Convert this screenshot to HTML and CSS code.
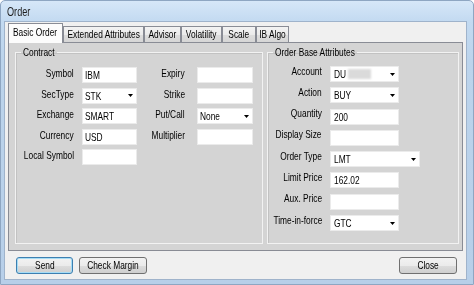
FILE: index.html
```html
<!DOCTYPE html>
<html>
<head>
<meta charset="utf-8">
<link rel="stylesheet" href="styles.css">
</head>
<body>
<div class="window">
  <div class="titlebar"><span class="sx">Order</span></div>
  <div class="client">
    <div class="tabs">
      <div class="tab active t1"><span class="sx">Basic Order</span></div>
      <div class="tab t2"><span class="sx">Extended Attributes</span></div>
      <div class="tab t3"><span class="sx">Advisor</span></div>
      <div class="tab t4"><span class="sx">Volatility</span></div>
      <div class="tab t5"><span class="sx">Scale</span></div>
      <div class="tab t6"><span class="sx">IB Algo</span></div>
    </div>
    <div class="page">
      <fieldset class="group contract">
        <legend class="lg1"><span class="sx">Contract</span></legend>
        <div class="grid4">
          <span class="lbl">Symbol</span><div class="field"><span class="sx">IBM</span></div>
          <span class="lbl lbl2">Expiry</span><div class="field"></div>
          <span class="lbl">SecType</span><div class="field combo"><span class="sx">STK</span><svg class="arrow" width="5" height="3" viewBox="0 0 5 3"><polygon points="0,0 5,0 2.5,3" fill="#000"/></svg></div>
          <span class="lbl lbl2">Strike</span><div class="field"></div>
          <span class="lbl">Exchange</span><div class="field"><span class="sx">SMART</span></div>
          <span class="lbl lbl2">Put/Call</span><div class="field combo"><span class="sx">None</span><svg class="arrow" width="5" height="3" viewBox="0 0 5 3"><polygon points="0,0 5,0 2.5,3" fill="#000"/></svg></div>
          <span class="lbl">Currency</span><div class="field"><span class="sx">USD</span></div>
          <span class="lbl lbl2">Multiplier</span><div class="field"></div>
          <span class="lbl">Local Symbol</span><div class="field"></div>
        </div>
      </fieldset>
      <fieldset class="group base">
        <legend class="lg2"><span class="sx">Order Base Attributes</span></legend>
        <div class="grid2">
          <span class="lbl">Account</span><div class="field combo w69"><span class="sx">DU</span><span class="redact"></span><svg class="arrow" width="5" height="3" viewBox="0 0 5 3"><polygon points="0,0 5,0 2.5,3" fill="#000"/></svg></div>
          <span class="lbl">Action</span><div class="field combo w69"><span class="sx">BUY</span><svg class="arrow" width="5" height="3" viewBox="0 0 5 3"><polygon points="0,0 5,0 2.5,3" fill="#000"/></svg></div>
          <span class="lbl">Quantity</span><div class="field w69"><span class="sx">200</span></div>
          <span class="lbl">Display Size</span><div class="field w69"></div>
          <span class="lbl">Order Type</span><div class="field combo w90"><span class="sx">LMT</span><svg class="arrow" width="5" height="3" viewBox="0 0 5 3"><polygon points="0,0 5,0 2.5,3" fill="#000"/></svg></div>
          <span class="lbl">Limit Price</span><div class="field w69"><span class="sx">162.02</span></div>
          <span class="lbl">Aux. Price</span><div class="field w69"></div>
          <span class="lbl">Time-in-force</span><div class="field combo w69"><span class="sx">GTC</span><svg class="arrow" width="5" height="3" viewBox="0 0 5 3"><polygon points="0,0 5,0 2.5,3" fill="#000"/></svg></div>
        </div>
      </fieldset>
    </div>
    <div class="buttons">
      <div class="btn default w-send"><span class="sx">Send</span></div>
      <div class="btn w-check"><span class="sx">Check Margin</span></div>
      <div class="btn w-close push"><span class="sx">Close</span></div>
    </div>
  </div>
</div>
</body>
</html>
```
FILE: styles.css
```css
html, body {
  margin: 0;
  padding: 0;
}
body {
  width: 474px;
  height: 285px;
  overflow: hidden;
  background: #ffffff;
  font-family: "Liberation Sans", Arial, sans-serif;
  font-size: 11px;
  color: #000;
}
.sx {
  display: inline-block;
  white-space: nowrap;
  transform: scaleX(0.76);
  transform-origin: left center;
}
.window {
  box-sizing: border-box;
  width: 474px;
  height: 285px;
  border: 1px solid #8ea6c2;
  border-radius: 5px 5px 0 0;
  background: linear-gradient(to bottom, #d6e7f8 0px, #c3daf1 20px, #bcd4ec 60px, #b7cfe9 100%);
  padding: 0 6px 4px 3px;
  display: flex;
  flex-direction: column;
}
.titlebar {
  height: 20px;
  line-height: 22px;
  padding-left: 3px;
  font-size: 12px;
  color: #1e1e1e;
}
.client {
  flex: 1;
  background: #f0f0f0;
  border: 1px solid #9fb3cb;
  display: flex;
  flex-direction: column;
}
.tabs {
  display: flex;
  align-items: flex-end;
  height: 20px;
  padding-left: 3px;
}
.tab {
  box-sizing: border-box;
  height: 16px;
  border: 1px solid #898c95;
  border-bottom: none;
  background: linear-gradient(to bottom, #f3f3f3 0%, #ebebeb 50%, #dddddd 51%, #d6d6d6 100%);
  display: flex;
  justify-content: center;
  align-items: center;
  line-height: 13px;
  overflow: visible;
}
.tab .sx,
.btn .sx {
  transform-origin: center center;
}
.tab.active {
  height: 20px;
  margin-bottom: -1px;
  background: #fcfcfc;
  align-items: flex-start;
  padding-top: 2px;
  position: relative;
  z-index: 1;
}
.t1 { width: 55px; }
.t2 { width: 81px; }
.t3 { width: 37px; }
.t4 { width: 41px; }
.t5 { width: 34px; }
.t6 { width: 33px; }
.page {
  box-sizing: border-box;
  margin-left: 3px;
  width: 455px;
  height: 209px;
  border: 1px solid #898c95;
  background: #d4d4d4;
  display: flex;
  gap: 4px;
  padding: 4px 0 6px 6px;
}
.group {
  margin: 0;
  padding: 0;
  min-width: 0;
  border: 1px solid #f2f2f2;
  box-shadow: inset 1px 1px 0 #c2c2c2;
  box-sizing: border-box;
}
.group legend {
  padding: 0 2px;
  margin-left: 5px;
  line-height: 11px;
  height: 11px;
  box-sizing: content-box;
  overflow: visible;
  white-space: nowrap;
}
.lg1 { width: 32px; }
.lg2 { width: 80px; }
.contract { width: 248px; }
.base { width: 192px; }
.grid4 {
  display: grid;
  grid-template-columns: 66px 55px 60px 56px;
  grid-auto-rows: 16px;
  row-gap: 4.6px;
  padding-top: 9px;
}
.grid2 {
  display: grid;
  grid-template-columns: 62px auto;
  grid-auto-rows: 16px;
  row-gap: 5.3px;
  padding-top: 8px;
  justify-items: start;
}
.lbl {
  display: block;
  justify-self: end;
  align-self: start;
  line-height: 16px;
  margin-top: -2px;
  margin-right: 8px;
  white-space: nowrap;
  transform: scaleX(0.76);
  transform-origin: right center;
}
.lbl2 { margin-right: 12px; }
.grid2 .lbl { margin-top: -3.5px; }
.field {
  box-sizing: border-box;
  height: 16px;
  background: #ffffff;
  border: 1px solid #ebebeb;
  line-height: 14px;
  padding-left: 2px;
  display: flex;
  align-items: center;
  white-space: nowrap;
  overflow: hidden;
}
.grid2 .field { padding-left: 3px; }
.w69 { width: 69px; }
.w90 { width: 90px; }
.combo .arrow {
  margin-left: auto;
  margin-right: 3px;
  flex: none;
}
.redact {
  display: inline-block;
  width: 23px;
  height: 10px;
  margin-left: -2px;
  background: #dadada;
  filter: blur(1px);
}
.buttons {
  display: flex;
  gap: 6px;
  padding: 6px 9px 0 11px;
}
.btn {
  box-sizing: border-box;
  height: 17px;
  border: 1px solid #707070;
  border-radius: 3px;
  background: linear-gradient(to bottom, #f2f2f2 0%, #ebebeb 50%, #dddddd 51%, #cfcfcf 100%);
  display: flex;
  justify-content: center;
  align-items: center;
  line-height: 13px;
}
.btn.default {
  border-color: #3c7fb1;
  box-shadow: inset 0 0 0 1px #a6dcf5;
}
.w-send { width: 57px; }
.w-check { width: 68px; }
.w-close { width: 58px; }
.push { margin-left: auto; }
```
